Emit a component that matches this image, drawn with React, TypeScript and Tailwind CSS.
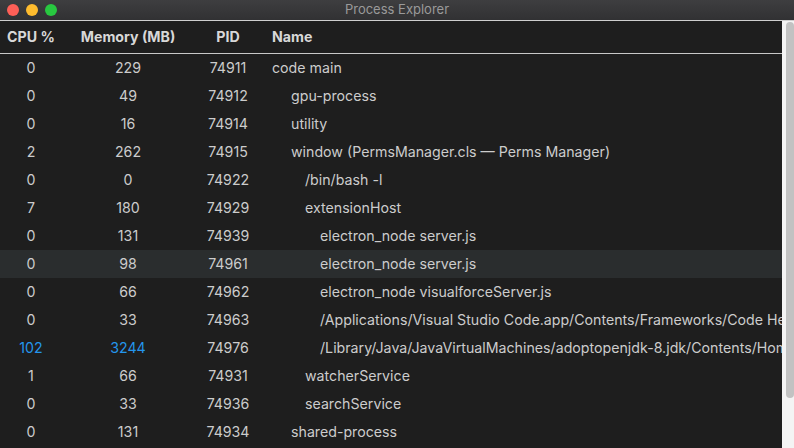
type Proc = {
  cpu: string;
  mem: string;
  pid: string;
  name: string;
  depth: number;
  hot?: boolean;
  selected?: boolean;
};

const processes: Proc[] = [
  { cpu: "0", mem: "229", pid: "74911", name: "code main", depth: 0 },
  { cpu: "0", mem: "49", pid: "74912", name: "gpu-process", depth: 1 },
  { cpu: "0", mem: "16", pid: "74914", name: "utility", depth: 1 },
  { cpu: "2", mem: "262", pid: "74915", name: "window (PermsManager.cls — Perms Manager)", depth: 1 },
  { cpu: "0", mem: "0", pid: "74922", name: "/bin/bash -l", depth: 2 },
  { cpu: "7", mem: "180", pid: "74929", name: "extensionHost", depth: 2 },
  { cpu: "0", mem: "131", pid: "74939", name: "electron_node server.js", depth: 3 },
  { cpu: "0", mem: "98", pid: "74961", name: "electron_node server.js", depth: 3, selected: true },
  { cpu: "0", mem: "66", pid: "74962", name: "electron_node visualforceServer.js", depth: 3 },
  {
    cpu: "0",
    mem: "33",
    pid: "74963",
    name: "/Applications/Visual Studio Code.app/Contents/Frameworks/Code Helper.app/Contents/MacOS/Code Helper",
    depth: 3,
  },
  {
    cpu: "102",
    mem: "3244",
    pid: "74976",
    name: "/Library/Java/JavaVirtualMachines/adoptopenjdk-8.jdk/Contents/Home/bin/java",
    depth: 3,
    hot: true,
  },
  { cpu: "1", mem: "66", pid: "74931", name: "watcherService", depth: 2 },
  { cpu: "0", mem: "33", pid: "74936", name: "searchService", depth: 2 },
  { cpu: "0", mem: "131", pid: "74934", name: "shared-process", depth: 1 },
];

// indent steps as measured from the tree column
const indentClass = ["pl-[10px]", "pl-[29px]", "pl-[43px]", "pl-[58px]"];

function TrafficLights() {
  return (
    <div className="flex items-center gap-[7px] pl-[7px]">
      <span className="h-[12px] w-[12px] rounded-full bg-[#fe5f57]" />
      <span className="h-[12px] w-[12px] rounded-full bg-[#febc2e]" />
      <span className="h-[12px] w-[12px] rounded-full bg-[#28c840]" />
    </div>
  );
}

export default function App() {
  return (
    <div
      className="flex h-[448px] w-[794px] flex-col overflow-hidden bg-[#1e1e1e] text-[14.2px] text-[#cccccc]"
      style={{ fontFamily: "Inter, 'Liberation Sans', sans-serif" }}
    >
      {/* Title bar */}
      <div className="relative flex h-[21px] shrink-0 items-center border-b border-[#cfcfcf] bg-gradient-to-b from-[#3e3e40] to-[#313133]">
        <TrafficLights />
        <div className="absolute inset-0 flex items-center justify-center text-[13px] text-[#9a9a9a]">
          Process Explorer
        </div>
      </div>

      <div className="flex min-h-0 flex-1">
        {/* Table */}
        <div className="min-w-0 flex-1">
          <div className="flex h-[33px] items-center border-b border-[#c8c8c8] font-bold text-[#d8d8d8]">
            <div className="w-[62px] text-center">CPU %</div>
            <div className="w-[132px] text-center">Memory (MB)</div>
            <div className="w-[68px] text-center">PID</div>
            <div className="pl-[10px]">Name</div>
          </div>

          {processes.map((p) => (
            <div
              key={p.pid}
              className={`flex h-[28px] items-center whitespace-nowrap ${p.selected ? "bg-[#2a2d2e]" : ""}`}
            >
              <div className={`w-[62px] shrink-0 text-center ${p.hot ? "text-[#2496ed]" : ""}`}>{p.cpu}</div>
              <div className={`w-[132px] shrink-0 text-center ${p.hot ? "text-[#2496ed]" : ""}`}>{p.mem}</div>
              <div className="w-[68px] shrink-0 text-center">{p.pid}</div>
              <div className={`min-w-0 flex-1 overflow-hidden ${indentClass[p.depth]}`}>{p.name}</div>
            </div>
          ))}
        </div>

        {/* Scrollbar */}
        <div className="flex w-[12px] shrink-0 bg-[#f4f4f4] pl-[4px] pt-[1px]">
          <div className="h-[376px] w-[8px] rounded-t-[4px] rounded-b-[4px] bg-[#c2c2c2]" />
        </div>
      </div>
    </div>
  );
}
